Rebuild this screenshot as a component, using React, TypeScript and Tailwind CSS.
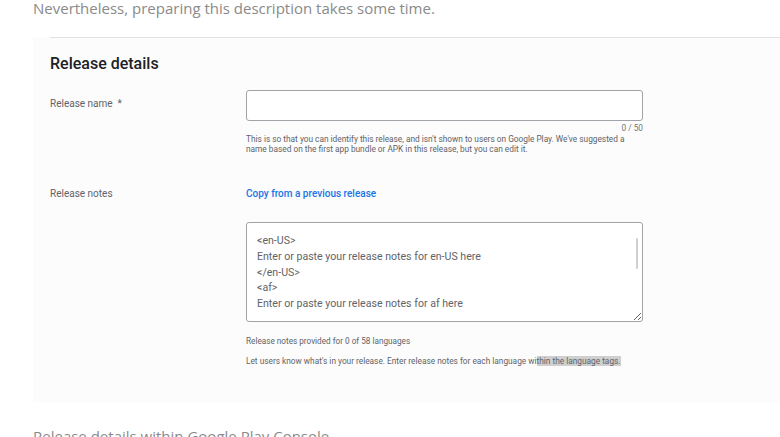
import { useState } from 'react';

const notesText = `<en-US>
Enter or paste your release notes for en-US here
</en-US>
<af>
Enter or paste your release notes for af here`;

function FieldRow({ label, labelPad, children, className = '' }: { label: string; labelPad: string; children: React.ReactNode; className?: string }) {
  return (
    <div className={`flex ${className}`}>
      <div className={`w-[196px] shrink-0 text-[10px] leading-[14px] text-[#5f6368] whitespace-pre ${labelPad}`}>{label}</div>
      <div className="w-[397px]">{children}</div>
    </div>
  );
}

export default function App() {
  const [name, setName] = useState('');
  const [notes, setNotes] = useState(notesText);

  return (
    <div className="w-[780px] h-[437px] overflow-hidden bg-white font-['Roboto',sans-serif]">
      {/* intro copy above the screenshot */}
      <p className="pl-[33px] text-[15px] leading-[17px] text-[#8a8a8a] font-['Open_Sans',sans-serif]">
        Nevertheless, preparing this description takes some time.
      </p>

      <div className="mt-[20px] ml-[33px] h-[365px] bg-[#fcfcfc]">
        <div className="ml-[17px] border-t border-[#e2e2e2] pt-[15px]">
          <h2 className="text-[16px] leading-[22px] font-medium text-[#202124]">Release details</h2>

          {/* release name */}
          <FieldRow label="Release name  *" labelPad="pt-[7px]" className="mt-[15px]">
            <input
              value={name}
              onChange={e => setName(e.target.value)}
              className="block w-full h-[31px] rounded-[3px] border border-[#a0a4a8] bg-white outline-none"
            />
            <div className="mt-[2px] text-right text-[8.3px] leading-[10px] text-[#70757a]">0 / 50</div>
            <p className="mt-[1px] text-[8.3px] leading-[10px] text-[#5f6368]">
              This is so that you can identify this release, and isn't shown to users on Google Play. We've suggested a
              name based on the first app bundle or APK in this release, but you can edit it.
            </p>
          </FieldRow>

          {/* release notes */}
          <FieldRow label="Release notes" labelPad="pt-0" className="mt-[33px]">
            <button className="block text-[10px] leading-[14px] font-medium text-[#1a73e8]">Copy from a previous release</button>
            <div className="relative mt-[21px]">
              <textarea
                value={notes}
                onChange={e => setNotes(e.target.value)}
                className="block w-full h-[100px] rounded-[3px] border border-[#a0a4a8] bg-white pt-[10px] pl-[10px] text-[10.6px] leading-[15.8px] text-[#5f6368] outline-none resize overflow-hidden"
              />
              <div className="absolute right-[5px] top-[16px] h-[31px] w-[2px] rounded bg-[#d0d0d4]" />
            </div>
            <div className="mt-[14px] text-[8.2px] leading-[10px] text-[#5f6368]">Release notes provided for 0 of 58 languages</div>
            <div className="mt-[10px] text-[8.3px] leading-[10px] text-[#5f6368]">
              Let users know what's in your release. Enter release notes for each language wi
              <span className="bg-[#cfcfcf]">thin the language tags.</span>
            </div>
          </FieldRow>
        </div>
      </div>

      <p className="mt-[25px] pl-[33px] text-[15px] leading-[19px] text-[#8a8a8a] font-['Open_Sans',sans-serif]">
        Release details within Google Play Console
      </p>
    </div>
  );
}
